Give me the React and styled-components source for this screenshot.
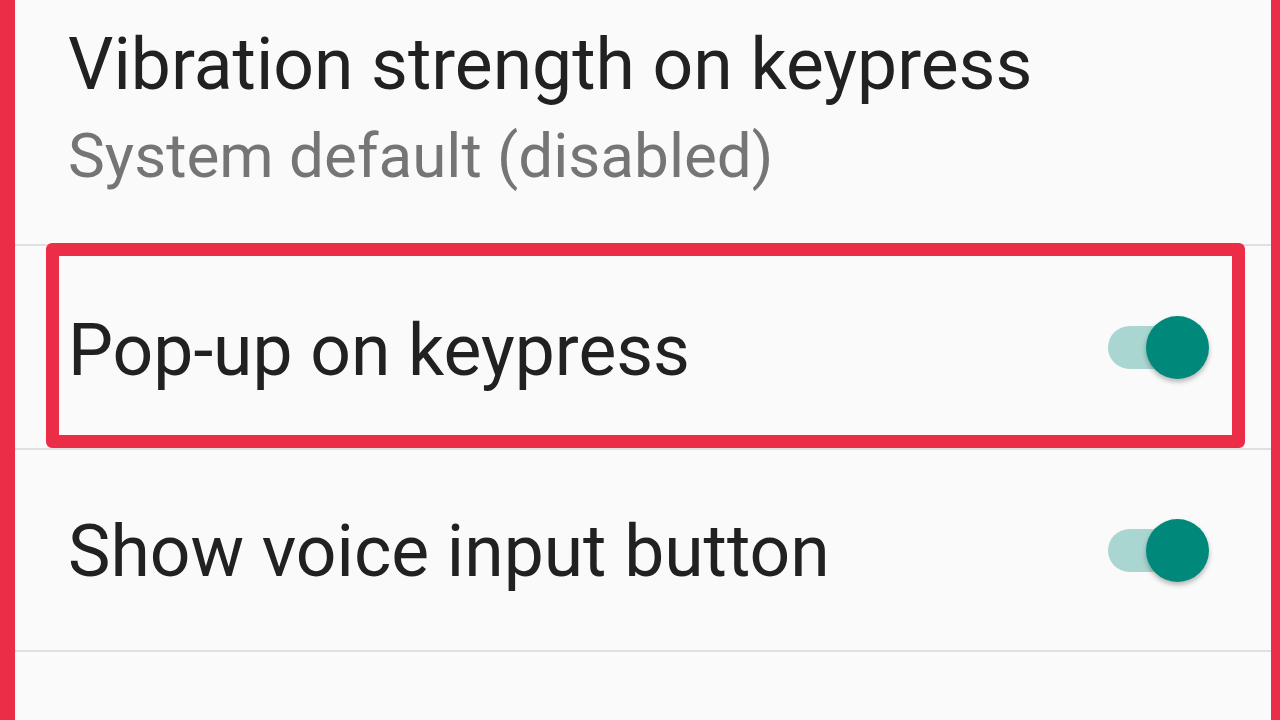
import React from "react";
import styled, { createGlobalStyle } from "styled-components";

const GlobalStyle = createGlobalStyle`
  html, body {
    margin: 0;
    padding: 0;
    background: #fafafa;
  }
  body {
    font-family: Roboto, "Noto Sans", sans-serif;
  }
`;

const RED = "#ec2d48";

export default function App() {
  return (
    <>
      <GlobalStyle />
      <Screen>
        <List>
          <Row $height={246} $top>
            <TextBlock>
              <Title>Vibration strength on keypress</Title>
              <Summary>System default (disabled)</Summary>
            </TextBlock>
          </Row>
          <Row $height={204}>
            <Title $shift={8}>Pop-up on keypress</Title>
            <Toggle />
            <Highlight />
          </Row>
          <Row $height={202}>
            <Title $shift={4}>Show voice input button</Title>
            <Toggle />
          </Row>
          <Row $height={68} $last />
        </List>
      </Screen>
    </>
  );
}

const Toggle = () => (
  <Switch>
    <Track />
    <Thumb />
  </Switch>
);

const Screen = styled.div`
  width: 1280px;
  height: 720px;
  box-sizing: border-box;
  border-left: 15px solid ${RED};
  border-right: 9px solid ${RED};
  background: #fafafa;
  overflow: hidden;
  display: flex;
`;

const List = styled.div`
  flex: 1;
  display: flex;
  flex-direction: column;
`;

const Row = styled.div`
  position: relative;
  flex: none;
  height: ${(p) => p.$height}px;
  box-sizing: border-box;
  display: flex;
  align-items: ${(p) => (p.$top ? "flex-start" : "center")};
  justify-content: space-between;
  padding: 0 62px 0 53px;
  border-bottom: ${(p) => (p.$last ? "none" : "2px solid #e0e0e0")};
`;

const TextBlock = styled.div`
  display: flex;
  flex-direction: column;
  padding-top: 23px;
`;

const Title = styled.div`
  font-size: 71.4px;
  line-height: 84px;
  color: #212121;
  white-space: nowrap;
  padding-top: ${(p) => p.$shift || 0}px;
`;

const Summary = styled.div`
  font-size: 62px;
  line-height: 72px;
  color: #757575;
  margin-top: 13px;
  white-space: nowrap;
`;

const Switch = styled.div`
  position: relative;
  width: 101px;
  height: 63px;
  flex: none;
`;

const Track = styled.span`
  position: absolute;
  left: 0;
  top: 10px;
  width: 86px;
  height: 43px;
  border-radius: 22px;
  background: #a9d6d1;
`;

const Thumb = styled.span`
  position: absolute;
  right: 0;
  top: 0;
  width: 63px;
  height: 63px;
  border-radius: 50%;
  background: #00897b;
  box-shadow: 0 3px 5px rgba(0, 0, 0, 0.28);
`;

const Highlight = styled.div`
  position: absolute;
  left: 31px;
  right: 26px;
  top: -3px;
  bottom: 0;
  border: 13px solid ${RED};
  border-radius: 6px;
  pointer-events: none;
`;
